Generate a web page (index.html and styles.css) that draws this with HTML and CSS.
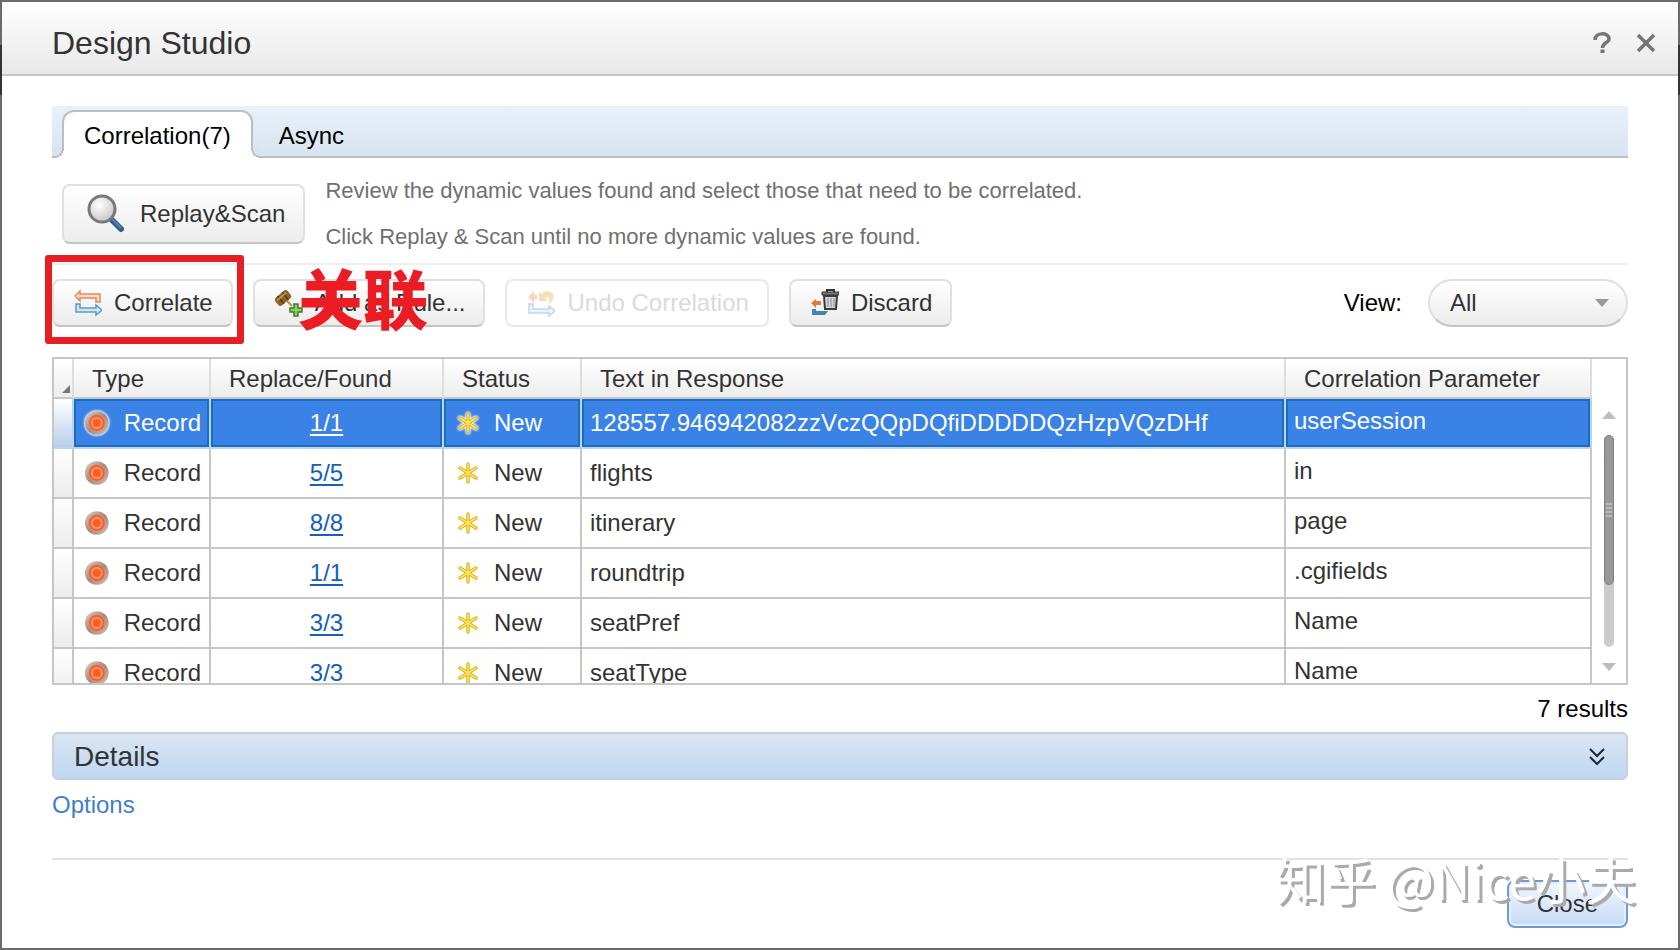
FILE: index.html
```html
<!DOCTYPE html>
<html lang="en">
<head>
    <meta charset="UTF-8">
    <meta name="viewport" content="width=device-width, initial-scale=1.0">
    <title>Design Studio</title>
    <link rel="stylesheet" href="styles.css">
</head>
<body>

    <!-- shared icons -->
    <svg class="defs" width="0" height="0">
        <defs>
            <radialGradient id="lens" cx="40%" cy="35%" r="70%">
                <stop offset="0" stop-color="#fff"/>
                <stop offset="1" stop-color="#c4c4c4"/>
            </radialGradient>
            <linearGradient id="ring" x1="0" y1="0" x2="1" y2="1">
                <stop offset="0" stop-color="#d8d4d2"/>
                <stop offset="0.5" stop-color="#a08a82"/>
                <stop offset="1" stop-color="#c9c5c3"/>
            </linearGradient>
        </defs>
        <symbol id="record" viewBox="0 0 30 30">
            <circle cx="15" cy="15" r="12" fill="url(#ring)"/>
            <circle cx="15" cy="15" r="9" fill="#f08a66"/>
            <circle cx="15" cy="15" r="8" fill="#e9622f"/>
            <circle cx="15" cy="15" r="5" fill="#ff5a1f" stroke="#ff9a75" stroke-width="2"/>
        </symbol>
        <symbol id="star" viewBox="0 0 24 24">
            <path d="M12 3v18M4 7l16 10M20 7L4 17" fill="none" stroke="#dcae24" stroke-width="3.500" stroke-linecap="round"/>
            <path d="M12 3v18M4 7l16 10M20 7L4 17" fill="none" stroke="#fbe65a" stroke-width="1.500" stroke-linecap="round"/>
        </symbol>
    </svg>

    <div class="dialog">
        <header class="title-bar">
            <h1>Design Studio</h1>
            <div class="title-actions">
                <button class="icon-btn" aria-label="Help">
                    <svg width="20" height="24" viewBox="0 0 20 24"><path d="M3 9C3 1 17 1 17 8C17 12 10.500 11 10.500 17" fill="none" stroke="#757575" stroke-width="3.500"/><rect x="8.500" y="18.500" width="4" height="3.500" fill="#757575"/></svg>
                </button>
                <button class="icon-btn" aria-label="Close dialog">
                    <svg width="20" height="20" viewBox="0 0 20 20"><path d="M2 2l16 16M18 2L2 18" stroke="#757575" stroke-width="3.500"/></svg>
                </button>
            </div>
        </header>

        <main class="content">
            <nav class="tabs">
                <button class="tab active">Correlation(7)</button>
                <button class="tab">Async</button>
            </nav>

            <section class="scan">
                <button class="btn btn-large">
                    <svg width="38" height="40" viewBox="0 0 38 40"><path d="M26 26l9 9" stroke="#2f5f8f" stroke-width="6" stroke-linecap="round"/><path d="M26 25l9 9" stroke="#5784ad" stroke-width="2"/><circle cx="16" cy="15" r="13" fill="url(#lens)" stroke="#77797b" stroke-width="3"/></svg>
                    Replay&amp;Scan
                </button>
                <div class="hint">
                    <p>Review the dynamic values found and select those that need to be correlated.</p>
                    <p>Click Replay &amp; Scan until no more dynamic values are found.</p>
                </div>
            </section>

            <section class="toolbar">
                <div class="marked">
                    <button class="btn">
                        <svg width="28" height="28" viewBox="0 0 28 28"><path d="M1 7l5-5v3h20v8h-4V9H6v3z" fill="#fbdcc8" stroke="#e58a55" stroke-width="1.500"/><path d="M28 21l-6 5v-3H2v-8h4v4h16v-3z" fill="#cfe6f4" stroke="#5c9cc6" stroke-width="1.500"/></svg>
                        Correlate
                    </button>
                    <span class="mark-box"></span>
                    <span class="mark-text">关联</span>
                </div>
                <button class="btn">
                    <svg width="28" height="28" viewBox="0 0 28 28"><path d="M12 12l5 5" stroke="#c08a45" stroke-width="2"/><g transform="rotate(-40 8 9)"><rect x="0" y="4" width="16" height="10" rx="3" fill="#8a6427"/><path d="M5 4v10M11 4v10" stroke="#5b3d10" stroke-width="1.500"/><path d="M2 7h12" stroke="#c09a55" stroke-width="1.500"/></g><path d="M19 15h4v4h4v4h-4v4h-4v-4h-4v-4h4z" fill="#8ccf6c" stroke="#3a7d2a" stroke-width="1.500"/></svg>
                    Add as Rule...
                </button>
                <button class="btn" disabled>
                    <svg width="28" height="28" viewBox="0 0 28 28"><path d="M1 8l6-6v4h3v4H7v4z" fill="#ee9468"/><path d="M2 15h4v5h16v-3l6 5-6 5v-3H2z" fill="#cfe6f4" stroke="#5c9cc6" stroke-width="1.500"/><path d="M12 2v10h9l-3-3c4-3 6 1 3 6 8-3 7-13-1-13-2 0-3 1-5 3z" fill="#e4b64a"/></svg>
                    Undo Correlation
                </button>
                <button class="btn">
                    <svg width="28" height="28" viewBox="0 0 28 28"><path d="M0 14l5-4v2h5v4H5v3z" fill="#e67a3c"/><path d="M1 20h4v2h12l-3 4H1z" fill="#3f86b8"/><path d="M11 3h17v3H11z" fill="#777" stroke="#333"/><path d="M16 3V1h7v2" fill="none" stroke="#333" stroke-width="2"/><path d="M13 7h13l-1 13H14z" fill="#d6d6d6" stroke="#3b3b3b" stroke-width="2"/><path d="M17 9v9M20 9v9M23 9v9" stroke="#8a8a8a"/></svg>
                    Discard
                </button>
                <label class="view-label" for="view">View:</label>
                <select id="view" class="view-select">
                    <option>All</option>
                </select>
            </section>

            <section class="grid">
                <div class="grid-rows">
                    <table>
                        <colgroup>
                            <col class="col-handle">
                            <col class="col-type">
                            <col class="col-found">
                            <col class="col-status">
                            <col>
                            <col class="col-param">
                        </colgroup>
                        <thead>
                            <tr>
                                <th class="corner"><svg width="8" height="8" viewBox="0 0 8 8"><path d="M8 0v8H0z" fill="#777"/></svg></th>
                                <th>Type</th>
                                <th>Replace/Found</th>
                                <th>Status</th>
                                <th>Text in Response</th>
                                <th>Correlation Parameter</th>
                            </tr>
                        </thead>
                        <tbody>
                            <tr class="selected">
                                <td class="handle"></td>
                                <td><div class="cell"><svg class="rec"><use href="#record"/></svg>Record</div></td>
                                <td class="found"><a href="#">1/1</a></td>
                                <td><div class="cell status"><svg class="star"><use href="#star"/></svg>New</div></td>
                                <td>128557.946942082zzVczQQpDQfiDDDDDQzHzpVQzDHf</td>
                                <td class="param">userSession</td>
                            </tr>
                            <tr>
                                <td class="handle"></td>
                                <td><div class="cell"><svg class="rec"><use href="#record"/></svg>Record</div></td>
                                <td class="found"><a href="#">5/5</a></td>
                                <td><div class="cell status"><svg class="star"><use href="#star"/></svg>New</div></td>
                                <td>flights</td>
                                <td class="param">in</td>
                            </tr>
                            <tr>
                                <td class="handle"></td>
                                <td><div class="cell"><svg class="rec"><use href="#record"/></svg>Record</div></td>
                                <td class="found"><a href="#">8/8</a></td>
                                <td><div class="cell status"><svg class="star"><use href="#star"/></svg>New</div></td>
                                <td>itinerary</td>
                                <td class="param">page</td>
                            </tr>
                            <tr>
                                <td class="handle"></td>
                                <td><div class="cell"><svg class="rec"><use href="#record"/></svg>Record</div></td>
                                <td class="found"><a href="#">1/1</a></td>
                                <td><div class="cell status"><svg class="star"><use href="#star"/></svg>New</div></td>
                                <td>roundtrip</td>
                                <td class="param">.cgifields</td>
                            </tr>
                            <tr>
                                <td class="handle"></td>
                                <td><div class="cell"><svg class="rec"><use href="#record"/></svg>Record</div></td>
                                <td class="found"><a href="#">3/3</a></td>
                                <td><div class="cell status"><svg class="star"><use href="#star"/></svg>New</div></td>
                                <td>seatPref</td>
                                <td class="param">Name</td>
                            </tr>
                            <tr>
                                <td class="handle"></td>
                                <td><div class="cell"><svg class="rec"><use href="#record"/></svg>Record</div></td>
                                <td class="found"><a href="#">3/3</a></td>
                                <td><div class="cell status"><svg class="star"><use href="#star"/></svg>New</div></td>
                                <td>seatType</td>
                                <td class="param">Name</td>
                            </tr>
                        </tbody>
                    </table>
                </div>
                <div class="scrollbar">
                    <svg width="14" height="8" viewBox="0 0 14 8"><path d="M7 0l7 8H0z" fill="#bdbdbd"/></svg>
                    <div class="track">
                        <div class="thumb">
                            <svg width="6" height="14" viewBox="0 0 6 14"><path d="M0 1h6M0 5h6M0 9h6M0 13h6" stroke="#bbb" stroke-width="2"/></svg>
                        </div>
                    </div>
                    <svg width="14" height="8" viewBox="0 0 14 8"><path d="M0 0h14L7 8z" fill="#bdbdbd"/></svg>
                </div>
            </section>

            <p class="results">7 results</p>

            <button class="details">
                Details
                <svg width="18" height="20" viewBox="0 0 18 20"><path d="M2 2l7 7 7-7M2 10l7 7 7-7" fill="none" stroke="#1c2733" stroke-width="2"/></svg>
            </button>

            <a class="options" href="#">Options</a>
        </main>

        <footer class="footer">
            <button class="btn close-btn">Close</button>
            <span class="watermark">知乎 @Nice小夫</span>
        </footer>
    </div>

</body>
</html>
```

FILE: styles.css
```css
* {
    box-sizing: border-box;
}
body {
    margin: 0;
    padding: 2px;
    min-height: 100vh;
    display: flex;
    background: linear-gradient(#6b6b6b 45px, #333 45px, #333 95px, #6b6b6b 95px);
    font-family: "Liberation Sans", Arial, sans-serif;
    font-size: 24px;
    line-height: 28px;
    color: #333;
}
button, select {
    font: inherit;
    color: inherit;
    cursor: pointer;
}
p {
    margin: 0;
}
.defs {
    position: absolute;
}
.dialog {
    flex: 1;
    min-width: 0;
    display: flex;
    flex-direction: column;
    background: #fff;
}
.title-bar {
    display: flex;
    justify-content: space-between;
    align-items: center;
    padding: 23px 20px 13px 50px;
    border-bottom: 2px solid #c6c6c6;
    background: linear-gradient(#fff, #e8e8e8);
}
h1 {
    margin: 0;
    font-size: 32px;
    font-weight: normal;
    line-height: 36px;
}
.title-actions {
    display: flex;
    align-items: center;
    gap: 20px;
}
.icon-btn {
    display: flex;
    padding: 2px;
    border: none;
    background: none;
}
.content {
    flex: 1;
    padding: 30px 50px 0;
}

/* tabs */
.tabs {
    display: flex;
    height: 52px;
    padding: 4px 10px 0;
    border-bottom: 2px solid #b9bfc9;
    background: linear-gradient(#e9f0fa, #d8e4ef);
}
.tab {
    position: relative;
    height: 48px;
    padding: 2px 24px 0;
    border: 2px solid transparent;
    border-bottom: none;
    background: none;
    color: #000;
}
.tab.active {
    padding: 2px 20px 0;
    border-color: #b9bfc9;
    border-radius: 12px 12px 0 0;
    background: #fff;
}
/* curved feet of the active tab */
.tab.active::before,
.tab.active::after {
    content: "";
    position: absolute;
    bottom: 0;
    width: 10px;
    height: 10px;
}
.tab.active::before {
    left: -10px;
    background: radial-gradient(circle at 0 0, #d9e4f0 8px, #b9bfc9 8px, #b9bfc9 10px, #fff 10px);
}
.tab.active::after {
    right: -10px;
    background: radial-gradient(circle at 100% 0, #d9e4f0 8px, #b9bfc9 8px, #b9bfc9 10px, #fff 10px);
}

/* buttons */
.btn {
    display: flex;
    align-items: center;
    gap: 12px;
    height: 48px;
    padding: 0 18px 0 20px;
    border: 2px solid #e0e0e0;
    border-bottom-color: #c4c4c4;
    border-radius: 8px;
    background: linear-gradient(#fff, #ececec);
    white-space: nowrap;
}
.btn:disabled {
    border-color: #e8e8e8;
    background: #fff;
    color: #dadada;
}
.btn:disabled svg {
    opacity: 0.4;
}
.btn-large {
    height: 60px;
    padding: 0 18px 0 22px;
    gap: 16px;
}
.scan {
    display: flex;
    align-items: center;
    gap: 20px;
    padding: 10px 0 3px 10px;
    border-bottom: 2px solid #eee;
}
.hint {
    color: #707070;
    font-size: 22px;
    line-height: 46px;
}
.toolbar {
    display: flex;
    align-items: center;
    gap: 20px;
    padding: 14px 0 30px;
}
.marked {
    position: relative;
}
.mark-box {
    position: absolute;
    inset: -24px -11px -17px -7px;
    border: 7px solid #e81e27;
    border-radius: 3px;
}
.mark-text {
    position: absolute;
    left: 246px;
    top: -15px;
    color: #ec1c24;
    font-family: "Noto Sans CJK SC", sans-serif;
    font-size: 65px;
    font-weight: 900;
    line-height: 64px;
    white-space: nowrap;
}
.view-label {
    margin-left: auto;
    color: #000;
}
.view-select {
    width: 200px;
    height: 48px;
    margin-left: 6px;
    padding: 0 20px;
    appearance: none;
    border: 2px solid #e0e0e0;
    border-bottom-color: #c4c4c4;
    border-radius: 24px;
    background: url("data:image/svg+xml,%3Csvg xmlns='http://www.w3.org/2000/svg' width='14' height='8'%3E%3Cpath d='M0 0h14L7 8z' fill='%23999'/%3E%3C/svg%3E") no-repeat right 17px center, linear-gradient(#fff, #ececec);
}

/* results table */
.grid {
    display: flex;
    height: 328px;
    border: 2px solid #c6c6c6;
}
.grid-rows {
    flex: 1;
    min-width: 0;
    overflow: hidden;
}
table {
    width: 100%;
    table-layout: fixed;
    border-collapse: separate;
    border-spacing: 0;
}
.col-handle {
    width: 20px;
}
.col-type {
    width: 137px;
}
.col-found {
    width: 233px;
}
.col-status {
    width: 138px;
}
.col-param {
    width: 306px;
}
th {
    height: 40px;
    padding: 2px 18px 0;
    border-right: 2px solid #ddd;
    border-bottom: 2px solid #c6c6c6;
    background: linear-gradient(#fff, #ededed);
    font-weight: normal;
    text-align: left;
}
.corner {
    padding: 0 2px 4px 0;
    line-height: 8px;
    text-align: right;
    vertical-align: bottom;
}
td {
    height: 50px;
    padding: 0 8px;
    border-right: 2px solid #c6c6c6;
    border-bottom: 2px solid #c6c6c6;
    white-space: nowrap;
}
.handle {
    background: linear-gradient(#fff, #ececec);
}
.cell {
    display: flex;
    align-items: center;
    gap: 12px;
}
.status {
    gap: 14px;
    padding-left: 4px;
}
.found {
    text-align: center;
}
.found a {
    color: #1560b8;
    text-underline-offset: 3px;
}
.param {
    padding-bottom: 4px;
}
.selected td {
    border-color: #bcd3ea;
    background: #3a82e6;
    box-shadow: inset 0 0 0 2px #1a6ec2;
    color: #fff;
}
.selected .handle {
    background: linear-gradient(#fff, #b9cdea);
    box-shadow: none;
}
.selected .found a {
    color: #fff;
}
.rec {
    width: 30px;
    height: 30px;
}
.star {
    width: 24px;
    height: 24px;
}
.selected .rec, .selected .star {
    filter: drop-shadow(0 0 1px #fff) drop-shadow(0 0 1px #fff);
}
.scrollbar {
    width: 34px;
    display: flex;
    flex-direction: column;
    align-items: center;
    gap: 16px;
    padding: 52px 0 12px;
}
.track {
    flex: 1;
    width: 10px;
    border-radius: 5px;
    background: #cbcbcb;
}
.thumb {
    display: flex;
    align-items: center;
    justify-content: center;
    height: 150px;
    border: 1px solid #808080;
    border-radius: 5px;
    background: #989898;
}
.results {
    padding: 10px 0 9px;
    color: #000;
    text-align: right;
}
.details {
    display: flex;
    justify-content: space-between;
    align-items: center;
    width: 100%;
    height: 48px;
    padding: 2px 20px 0;
    border: 2px solid #c9d0da;
    border-radius: 6px;
    background: linear-gradient(#dae5f3, #c0d7f4);
    font-size: 28px;
}
.options {
    display: inline-block;
    margin-top: 11px;
    color: #3f7fca;
    text-decoration: none;
}
.footer {
    position: relative;
    display: flex;
    justify-content: flex-end;
    margin: 0 50px;
    padding: 20px 0;
    border-top: 2px solid #e2e2e2;
}
.close-btn {
    padding: 0 28px;
    border-color: #6f9bd0;
    background: linear-gradient(#f2f7fe, #c6daf6);
    box-shadow: inset 0 0 0 2px #e4f0fd;
}
.watermark {
    position: absolute;
    right: -8px;
    top: -10px;
    color: #fff;
    font-family: "Noto Sans CJK SC", sans-serif;
    font-size: 50px;
    line-height: 56px;
    text-shadow: 3px 3px 0 #aaa;
    white-space: nowrap;
    pointer-events: none;
}
```
